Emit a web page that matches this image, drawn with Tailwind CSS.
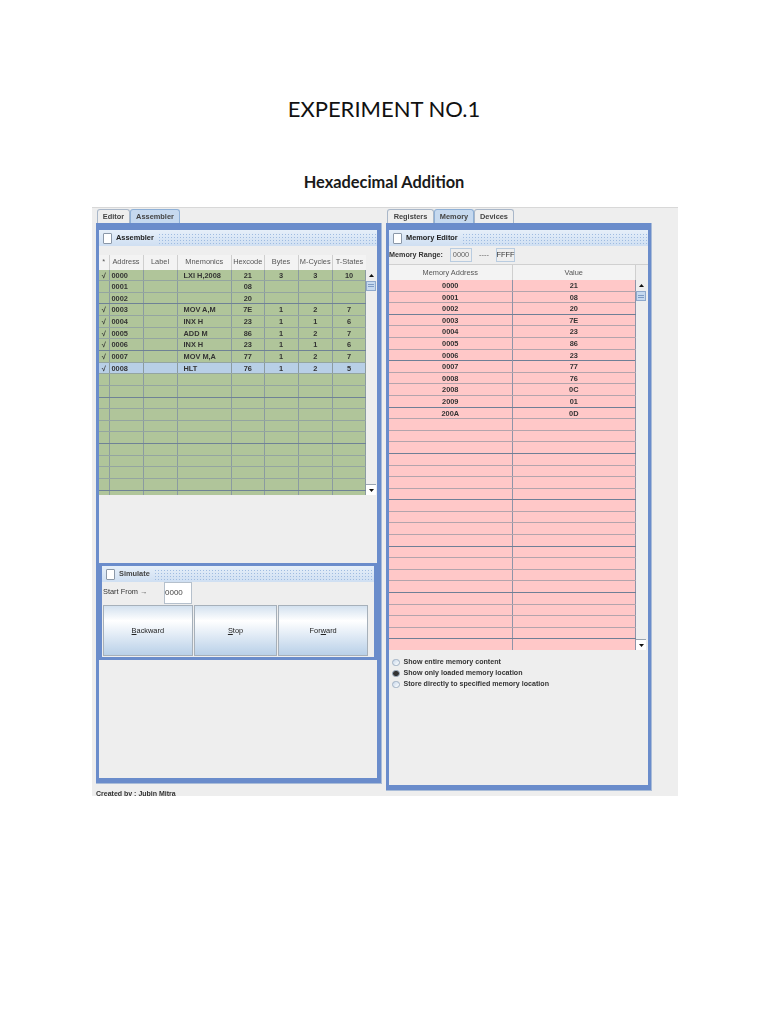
<!DOCTYPE html>
<html lang="en">
<head>
<meta charset="UTF-8">
<title>Experiment No.1</title>
<script src="https://cdn.jsdelivr.net/npm/@tailwindcss/browser@4"></script>
</head>
<body class="bg-white font-['Liberation_Sans',sans-serif]">
<div class="w-[768px] h-[1024px] overflow-hidden">
  <h1 class="pt-[94px] h-[165px] text-center font-['Lato',sans-serif] text-[22px] leading-[30px] text-[#111]">EXPERIMENT NO.1</h1>
  <h2 class="h-[34px] text-center font-['Lato',sans-serif] font-bold text-[16.4px] leading-[34px] text-[#1a1a1a]">Hexadecimal Addition</h2>

  <!-- simulator window -->
  <div class="ml-[92px] w-[586px] h-[589px] mt-[8px] bg-[#eeeeee] border-t border-[#d8d8d8] overflow-hidden blur-[0.45px] text-[7.4px] text-[#222]">
    <div class="flex items-start pl-1">

      <!-- left pane -->
      <div class="w-[290px]">
        <div class="flex h-[14px] mt-[1px] font-bold text-[#444]">
          <div class="w-[33px] ml-[1px] flex items-center justify-center border border-b-0 border-[#a9b7c9] rounded-t-[3px]">Editor</div>
          <div class="w-[50px] flex items-center justify-center border border-b-0 border-[#8fb0d6] rounded-t-[3px] bg-[#c6d9ef]">Assembler</div>
        </div>
        <div class="w-[286px] h-[561px] bg-[#6a8ccb] border-r-[1px] border-b-[1px] border-[#a9bcd8] pt-[7px] pl-[3px] pr-[4px] pb-[5px] flex flex-col">
          <div class="h-[333px] bg-[#eeeeee] flex flex-col">
            <div class="h-4 flex items-center gap-1 pl-1 bg-gradient-to-b from-[#e6eff9] to-[#cfdff2] font-bold">
              <span class="w-[9px] h-[11px] bg-white border border-[#8b98a8] rounded-[1px]"></span>
              <span>Assembler</span>
              <span class="flex-1 h-[11px] bg-[radial-gradient(#9fbbe0_1px,transparent_1px)] bg-[length:3px_3px]"></span>
            </div>
            <div class="h-[9px]"></div>
            <div class="flex">
              <div class="w-[267px]">
                <div class="grid grid-cols-[10.5px_34px_34px_54.5px_32.5px_34px_34.5px_33px] h-[14.5px] bg-[#f3f3f3] text-[#555] text-center items-center">
                  <span class="h-full leading-[14px] border-r border-[#cfcfcf]">*</span><span class="h-full leading-[14px] border-r border-[#cfcfcf]">Address</span><span class="h-full leading-[14px] border-r border-[#cfcfcf]">Label</span><span class="h-full leading-[14px] border-r border-[#cfcfcf]">Mnemonics</span><span class="h-full leading-[14px] border-r border-[#cfcfcf]">Hexcode</span><span class="h-full leading-[14px] border-r border-[#cfcfcf]">Bytes</span><span class="h-full leading-[14px] border-r border-[#cfcfcf]">M-Cycles</span><span class="h-full leading-[14px]">T-States</span>
                </div>
                <div id="asm-rows" class="h-[225.5px] overflow-hidden"></div>
              </div>
              <div class="w-[10px] mt-[14.5px] h-[225.5px] flex flex-col justify-between bg-[#eeeeee]">
                <div>
                  <div class="h-[11px] flex items-center justify-center"><svg width="5" height="3" viewBox="0 0 5 3"><path d="M2.5 0L5 3H0z" fill="#111"/></svg></div>
                  <div class="h-[10px] bg-[#c6d9ef] border border-[#8fa9cc] flex flex-col justify-center gap-[1px] px-[1px]">
                    <span class="h-px bg-[#7f9cc4]"></span><span class="h-px bg-[#7f9cc4]"></span>
                  </div>
                </div>
                <div class="h-[11px] flex items-center justify-center bg-white border-t border-[#9aa5b1]"><svg width="5" height="3" viewBox="0 0 5 3"><path d="M0 0H5L2.5 3z" fill="#111"/></svg></div>
              </div>
            </div>
          </div>
          <div class="h-[3px]"></div>
          <div class="h-[94px] px-[3px] pb-[3px] flex flex-col">
            <div class="h-[16px] flex items-center gap-1 pl-1 bg-gradient-to-b from-[#e6eff9] to-[#cfdff2] font-bold text-[#444]">
              <span class="w-[9px] h-[11px] bg-white border border-[#8b98a8] rounded-[1px]"></span>
              <span>Simulate</span>
              <span class="flex-1 h-[11px] bg-[radial-gradient(#9fbbe0_1px,transparent_1px)] bg-[length:3px_3px]"></span>
            </div>
            <div class="flex-1 bg-[#eeeeee] flex flex-col">
              <div class="h-[23px] flex items-start">
                <span class="w-[62px] pl-[1px] pt-[4px] text-[#333]">Start From →</span>
                <span class="w-[28px] h-[22px] bg-white border border-[#b5c0cc] flex items-center text-[8px] text-[#444]">0000</span>
              </div>
              <div class="flex gap-[1px] h-[51px] w-[266px] pl-px">
                <div class="w-[90px] flex items-center justify-center border border-[#a6b0ba] bg-gradient-to-b from-[#d3e1ef] via-white via-30% to-[#b9d0e8]"><span><u>B</u>ackward</span></div>
                <div class="w-[84px] flex items-center justify-center border border-[#a6b0ba] bg-gradient-to-b from-[#d3e1ef] via-white via-30% to-[#b9d0e8]"><span><u>S</u>top</span></div>
                <div class="w-[90px] flex items-center justify-center border border-[#a6b0ba] bg-gradient-to-b from-[#d3e1ef] via-white via-30% to-[#b9d0e8]"><span>For<u>w</u>ard</span></div>
              </div>
            </div>
          </div>
          <div class="flex-1 bg-[#eeeeee]"></div>
        </div>
        <div class="pt-[5px] font-bold text-[7px] text-[#333] leading-[10px]">Created by : Jubin Mitra</div>
      </div>

      <!-- right pane -->
      <div class="w-[266px]">
        <div class="flex h-[14px] mt-[1px] pl-px font-bold text-[#444]">
          <div class="w-[47px] flex items-center justify-center border border-b-0 border-[#a9b7c9] rounded-t-[3px]">Registers</div>
          <div class="w-[40px] flex items-center justify-center border border-b-0 border-[#8fb0d6] rounded-t-[3px] bg-[#c6d9ef]">Memory</div>
          <div class="w-[40px] flex items-center justify-center border border-b-0 border-[#a9b7c9] rounded-t-[3px]">Devices</div>
        </div>
        <div class="w-[266px] h-[568px] bg-[#6a8ccb] border-r-[1px] border-b-[1px] border-[#a9bcd8] pt-[7px] pl-[3px] pr-[3px] pb-[5px]">
          <div class="h-full bg-[#eeeeee] flex flex-col">
            <div class="h-4 flex items-center gap-1 pl-1 bg-gradient-to-b from-[#e6eff9] to-[#cfdff2] font-bold">
              <span class="w-[9px] h-[11px] bg-white border border-[#8b98a8] rounded-[1px]"></span>
              <span>Memory Editor</span>
              <span class="flex-1 h-[11px] bg-[radial-gradient(#9fbbe0_1px,transparent_1px)] bg-[length:3px_3px]"></span>
            </div>
            <div class="h-[19px] flex items-center font-bold text-[#333] border-b border-[#d0d0d0]">
              <span class="w-[61px] text-[7.2px]">Memory Range:</span>
              <span class="w-[22px] h-[14px] border border-[#b9cce0] flex items-center justify-center font-normal text-[#666]">0000</span>
              <span class="w-[24px] text-center font-normal text-[#666]">----</span>
              <span class="w-[19px] h-[14px] border border-[#b9cce0] flex items-center justify-center font-normal">FFFF</span>
            </div>
            <div class="flex">
              <div class="w-[247px]">
                <div class="grid grid-cols-2 h-[15px] bg-[#f3f3f3] text-[#555] text-center items-center">
                  <span class="h-full leading-[15px] border-r border-[#cfcfcf]">Memory Address</span><span class="h-full leading-[15px] border-r border-[#cfcfcf]">Value</span>
                </div>
                <div id="mem-rows" class="h-[370px] overflow-hidden"></div>
              </div>
              <div class="w-[10px] mt-[15px] h-[370px] flex flex-col justify-between">
                <div>
                  <div class="h-[11px] flex items-center justify-center"><svg width="5" height="3" viewBox="0 0 5 3"><path d="M2.5 0L5 3H0z" fill="#111"/></svg></div>
                  <div class="h-[10px] bg-[#c6d9ef] border border-[#8fa9cc] flex flex-col justify-center gap-[1px] px-[1px]">
                    <span class="h-px bg-[#7f9cc4]"></span><span class="h-px bg-[#7f9cc4]"></span>
                  </div>
                </div>
                <div class="h-[11px] flex items-center justify-center bg-white border-t border-[#9aa5b1]"><svg width="5" height="3" viewBox="0 0 5 3"><path d="M0 0H5L2.5 3z" fill="#111"/></svg></div>
              </div>
            </div>
            <div class="pt-[7px] pl-[3px] font-bold text-[7.1px] text-[#333] flex flex-col">
              <div class="h-[11px] flex items-center gap-[4px]"><span class="w-[7.5px] h-[7.5px] rounded-full bg-gradient-to-br from-[#c9d8ea] to-white border border-[#9fb0c4]"></span>Show entire memory content</div>
              <div class="h-[11px] flex items-center gap-[4px]"><span class="w-[7.5px] h-[7.5px] rounded-full bg-[#333] border border-[#9fb0c4]"></span>Show only loaded memory location</div>
              <div class="h-[11px] flex items-center gap-[4px]"><span class="w-[7.5px] h-[7.5px] rounded-full bg-gradient-to-br from-[#c9d8ea] to-white border border-[#9fb0c4]"></span>Store directly to specified memory location</div>
            </div>
          </div>
        </div>
      </div>

    </div>
  </div>
</div>

<script>
  const asm = [
    ['√','0000','','LXI H,2008','21','3','3','10'],
    ['','0001','','','08','','',''],
    ['','0002','','','20','','',''],
    ['√','0003','','MOV A,M','7E','1','2','7'],
    ['√','0004','','INX H','23','1','1','6'],
    ['√','0005','','ADD M','86','1','2','7'],
    ['√','0006','','INX H','23','1','1','6'],
    ['√','0007','','MOV M,A','77','1','2','7'],
    ['√','0008','','HLT','76','1','2','5'],
  ];
  const asmBox = document.getElementById('asm-rows');
  for (let i = 0; i < 20; i++) {
    const r = asm[i] || ['','','','','','','',''];
    const row = document.createElement('div');
    row.className = 'grid grid-cols-[10.5px_34px_34px_54.5px_32.5px_34px_34.5px_33px] h-[11.65px] leading-[11px] font-bold text-[#333] border-b '
      + (i % 4 == 2 ? 'border-[#6f8296] ' : 'border-[#94a5a0] ')
      + (i == 8 ? 'bg-[#b8cfe6]' : 'bg-[#b0c59a]');
    r.forEach((c, j) => {
      const s = document.createElement('span');
      s.textContent = c;
      s.className = 'h-full border-r border-[#8b9ba0] overflow-hidden whitespace-nowrap '
        + (j == 1 ? 'pl-[2px] ' : j == 3 ? 'pl-[6px] ' : 'text-center ');
      row.appendChild(s);
    });
    asmBox.appendChild(row);
  }

  const mem = [['0000','21'],['0001','08'],['0002','20'],['0003','7E'],['0004','23'],['0005','86'],['0006','23'],['0007','77'],['0008','76'],['2008','0C'],['2009','01'],['200A','0D']];
  const memBox = document.getElementById('mem-rows');
  for (let i = 0; i < 32; i++) {
    const r = mem[i] || ['',''];
    const row = document.createElement('div');
    row.className = 'grid grid-cols-2 h-[11.6px] leading-[11px] font-bold text-[#333] text-center bg-[#ffc8c8] border-b '
      + (i % 4 == 2 ? 'border-[#6f7f96]' : 'border-[#b3a4ac]');
    r.forEach(c => {
      const s = document.createElement('span');
      s.textContent = c;
      s.className = 'h-full border-r border-[#8f94a8]';
      row.appendChild(s);
    });
    memBox.appendChild(row);
  }
</script>
</body>
</html>
